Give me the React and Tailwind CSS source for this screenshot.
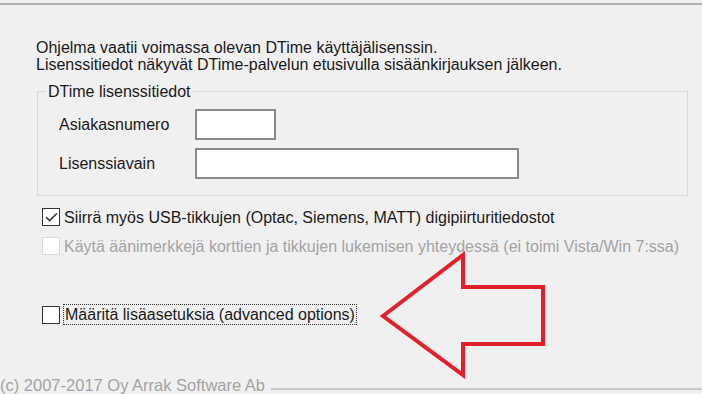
import { Check } from "lucide-react";

function Box({ checked, disabled }) {
  return (
    <span
      className={`flex h-[18px] w-[18px] shrink-0 items-center justify-center border bg-white ${
        disabled ? "border-[#d9d9d9]" : "border-[#333333]"
      }`}
    >
      {checked && <Check className="h-[15px] w-[15px] text-[#333333]" strokeWidth={2.5} />}
    </span>
  );
}

export default function App() {
  return (
    <div className="relative h-[394px] w-[702px] overflow-hidden bg-[#f0f0f0] font-['Liberation_Sans',Arial,sans-serif] text-[16px] leading-[17px] text-[#1a1a1a]">
      <div className="mt-[3px] h-[2px] bg-[#b0b0b0]" />

      <div className="pl-[36px] pt-[34px]">
        <p>Ohjelma vaatii voimassa olevan DTime käyttäjälisenssin.</p>
        <p>Lisenssitiedot näkyvät DTime-palvelun etusivulla sisäänkirjauksen jälkeen.</p>
      </div>

      <fieldset className="ml-[37px] mt-[10px] h-[113px] w-[651px] border border-[#d8d8d8] px-[8px] pt-[9px]">
        <legend className="px-[2px]">DTime lisenssitiedot</legend>
        <div className="flex items-center pl-[13px]">
          <span className="w-[136px]">Asiakasnumero</span>
          <span className="h-[31px] w-[81px] border-2 border-[#8a8a8a] bg-white" />
        </div>
        <div className="mt-[8px] flex items-center pl-[13px]">
          <span className="w-[136px]">Lisenssiavain</span>
          <span className="h-[31px] w-[324px] border-2 border-[#8a8a8a] bg-white" />
        </div>
      </fieldset>

      <div className="ml-[42px] mt-[12px] flex items-center gap-[4px]">
        <Box checked />
        <span>Siirrä myös USB-tikkujen (Optac, Siemens, MATT) digipiirturitiedostot</span>
      </div>
      <div className="ml-[42px] mt-[11px] flex items-center gap-[4px] text-[#a3a3a3]">
        <Box disabled />
        <span>Käytä äänimerkkejä korttien ja tikkujen lukemisen yhteydessä (ei toimi Vista/Win 7:ssa)</span>
      </div>

      <div className="ml-[42px] mt-[49px] flex items-center gap-[3px]">
        <Box />
        <span className="border border-dotted border-[#333333] px-px leading-[19px]">
          Määritä lisäasetuksia (advanced options)
        </span>
      </div>

      <div className="mt-[52px] flex items-center text-[16.5px] text-[#a3a3a3]">
        <span className="pr-[6px]">(c) 2007-2017 Oy Arrak Software Ab</span>
        <span className="mt-[6px] h-[2px] flex-1 bg-[#c8c8c8]" />
      </div>

      <svg
        className="absolute left-0 top-0"
        width="702"
        height="394"
        viewBox="0 0 702 394"
        fill="none"
      >
        <polygon
          points="383,316 463,255 463,287 543,287 543,344 463,344 463,375"
          stroke="#e3202a"
          strokeWidth="4"
          strokeLinejoin="miter"
        />
      </svg>
    </div>
  );
}
